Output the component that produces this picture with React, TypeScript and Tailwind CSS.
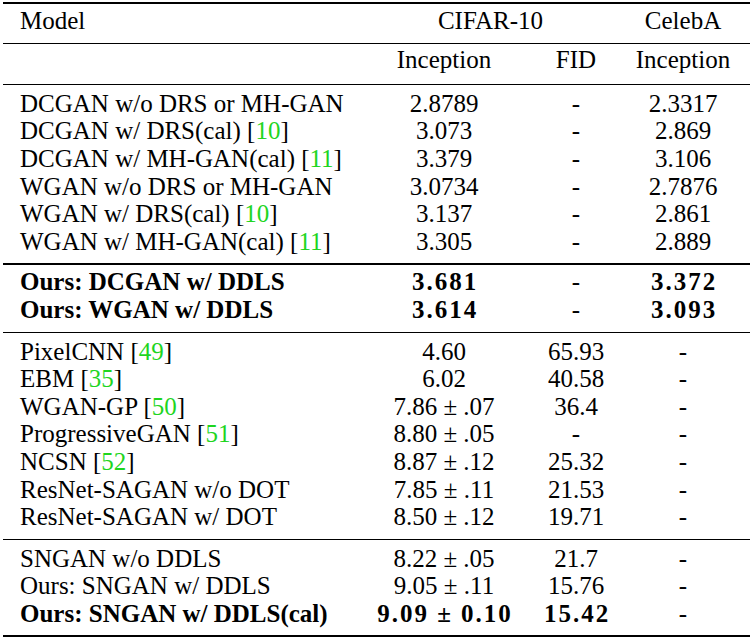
import React from "react";

type Cell = React.ReactNode;

const G = ({ n }: { n: string }) => (
  <span>
    [<span className="text-[#1fd51f]">{n}</span>]
  </span>
);

function Row({
  model,
  inc,
  fid,
  celeb,
  bold = false,
}: {
  model: Cell;
  inc: Cell;
  fid: Cell;
  celeb: Cell;
  bold?: boolean;
}) {
  return (
    <div className="flex h-[27.6px] leading-[27.6px] whitespace-nowrap">
      <div className={bold ? "w-[377px] pl-[17px] font-bold" : "w-[377px] pl-[17px]"}>{model}</div>
      <div className="w-[128px] flex justify-center">{inc}</div>
      <div className="w-[136px] flex justify-center">{fid}</div>
      <div className="w-[78px] flex justify-center">{celeb}</div>
    </div>
  );
}

const B = ({ children }: { children: React.ReactNode }) => (
  <span className="font-bold tracking-[2px] mr-[-2px]">{children}</span>
);

const Rule = () => <div className="h-[1.5px] bg-black" />;

export default function App() {
  return (
    <div className="w-[752px] h-[641px] bg-white text-black text-[25px] font-['Liberation_Serif','Times_New_Roman',serif]">
      <div className="ml-[3px] w-[747px] pt-[2px]">
        <div className="h-[2px] bg-black" />
        <div className="flex pt-[2.6px] pb-[8.5px] h-[38.7px] leading-[27.6px] whitespace-nowrap">
          <div className="w-[377px] pl-[17px]">Model</div>
          <div className="w-[221px] flex justify-center">CIFAR-10</div>
          <div className="w-[33px]" />
          <div className="w-[98px] flex justify-center">CelebA</div>
        </div>
        <Rule />
        <div className="pt-[2px] pb-[10px]">
          <Row model="" inc="Inception" fid="FID" celeb="Inception" />
        </div>
        <Rule />
        <div className="pt-[4.5px] pb-[8px]">
          <Row model="DCGAN w/o DRS or MH-GAN" inc="2.8789" fid="-" celeb="2.3317" />
          <Row model={<>DCGAN w/ DRS(cal) <G n="10" /></>} inc="3.073" fid="-" celeb="2.869" />
          <Row model={<>DCGAN w/ MH-GAN(cal) <G n="11" /></>} inc="3.379" fid="-" celeb="3.106" />
          <Row model="WGAN w/o DRS or MH-GAN" inc="3.0734" fid="-" celeb="2.7876" />
          <Row model={<>WGAN w/ DRS(cal) <G n="10" /></>} inc="3.137" fid="-" celeb="2.861" />
          <Row model={<>WGAN w/ MH-GAN(cal) <G n="11" /></>} inc="3.305" fid="-" celeb="2.889" />
        </div>
        <Rule />
        <div className="pt-[3.5px] pb-[8px]">
          <Row bold model="Ours: DCGAN w/ DDLS" inc={<B>3.681</B>} fid="-" celeb={<B>3.372</B>} />
          <Row bold model="Ours: WGAN w/ DDLS" inc={<B>3.614</B>} fid="-" celeb={<B>3.093</B>} />
        </div>
        <Rule />
        <div className="pt-[4.5px] pb-[8px]">
          <Row model={<>PixelCNN <G n="49" /></>} inc="4.60" fid="65.93" celeb="-" />
          <Row model={<>EBM <G n="35" /></>} inc="6.02" fid="40.58" celeb="-" />
          <Row model={<>WGAN-GP <G n="50" /></>} inc="7.86 ± .07" fid="36.4" celeb="-" />
          <Row model={<>ProgressiveGAN <G n="51" /></>} inc="8.80 ± .05" fid="-" celeb="-" />
          <Row model={<>NCSN <G n="52" /></>} inc="8.87 ± .12" fid="25.32" celeb="-" />
          <Row model="ResNet-SAGAN w/o DOT" inc="7.85 ± .11" fid="21.53" celeb="-" />
          <Row model="ResNet-SAGAN w/ DOT" inc="8.50 ± .12" fid="19.71" celeb="-" />
        </div>
        <Rule />
        <div className="pt-[4.5px] pb-[8px]">
          <Row model="SNGAN w/o DDLS" inc="8.22 ± .05" fid="21.7" celeb="-" />
          <Row model="Ours: SNGAN w/ DDLS" inc="9.05 ± .11" fid="15.76" celeb="-" />
          <Row bold model="Ours: SNGAN w/ DDLS(cal)" inc={<B>9.09 ± 0.10</B>} fid={<B>15.42</B>} celeb="-" />
        </div>
        <div className="h-[2px] bg-black" />
      </div>
    </div>
  );
}
